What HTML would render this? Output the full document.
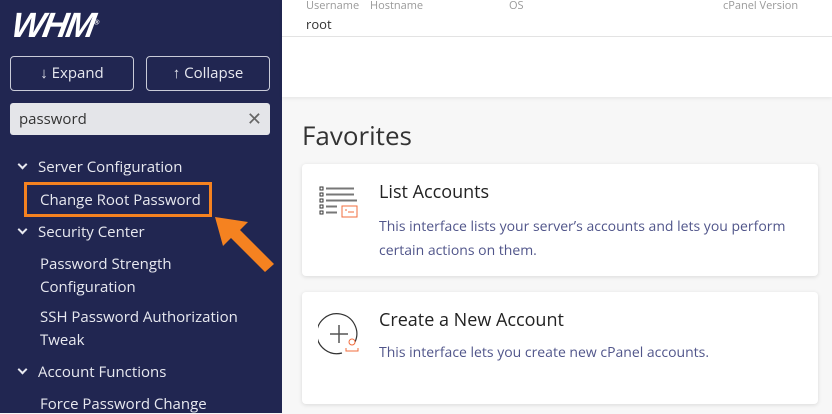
<!DOCTYPE html>
<html><head><meta charset="utf-8"><style>
*{margin:0;padding:0;box-sizing:border-box}
body{width:832px;height:413px;overflow:hidden;font-family:"Open Sans","Liberation Sans",sans-serif;background:#f7f7f7;position:relative}
.side{position:absolute;left:0;top:0;width:282px;height:413px;background:#212651;color:#e8e9f0}
.logo{position:absolute;left:12px;top:6px;font:italic 900 35px "Liberation Sans",sans-serif;color:#fff;letter-spacing:-2px;transform:skewX(-10deg)}
.btn{position:absolute;top:56px;height:35px;width:124px;border:1px solid #c9cbd8;border-radius:4px;color:#e8e9f0;font-size:15px;text-align:center;line-height:33px}
.search{position:absolute;left:10px;top:103px;width:260px;height:32px;background:#e4e5e9;border-radius:3px;color:#333;font-size:15px;line-height:32px;padding-left:9px}
.search span{position:absolute;right:8px;top:0;color:#666;font-size:18px}
.it{position:absolute;font-size:15px;color:#e8e9f0;white-space:nowrap}
.cat{left:38px}
.sub{left:40px}
.chev{position:absolute;left:19px;width:7px;height:7px;border-right:2px solid #e8e9f0;border-bottom:2px solid #e8e9f0;transform:rotate(45deg)}
.box{position:absolute;left:24px;top:182px;width:188px;height:35px;border:3px solid #f58220}
.top{position:absolute;left:282px;top:0;width:550px;height:97px;background:#fff;box-shadow:0 2px 3px rgba(0,0,0,.06)}
.hl{position:absolute;top:-2px;font-size:11px;color:#999}
.card{position:absolute;left:302px;width:516px;background:#fff;border-radius:4px;box-shadow:0 1px 4px rgba(0,0,0,.12)}
.ct{position:absolute;left:77px;font-size:18px;color:#222}
.cd{position:absolute;left:77px;font-size:14px;color:#50558a;line-height:24px}
</style></head><body>
<div class="side">
<div class="logo">WHM<sup style="font-size:7px">®</sup></div>
<div class="btn" style="left:10px">↓ Expand</div>
<div class="btn" style="left:146px">↑ Collapse</div>
<div class="search">password<span>✕</span></div>
<div class="chev" style="top:161px"></div><div class="it cat" style="top:157px">Server Configuration</div>
<div class="box"></div>
<div class="it sub" style="top:190px">Change Root Password</div>
<div class="chev" style="top:226px"></div><div class="it cat" style="top:222px">Security Center</div>
<div class="it sub" style="top:254px">Password Strength</div>
<div class="it sub" style="top:277px">Configuration</div>
<div class="it sub" style="top:307px">SSH Password Authorization</div>
<div class="it sub" style="top:330px">Tweak</div>
<div class="chev" style="top:366px"></div><div class="it cat" style="top:362px">Account Functions</div>
<div class="it sub" style="top:394px">Force Password Change</div>
<svg style="position:absolute;left:212px;top:214px" width="65" height="60" viewBox="0 0 65 60"><polygon points="3,3 36,8 28,16 62,50 53,58 19,24 11,32" fill="#f58220"/></svg>
</div>
<div class="top">
<div class="hl" style="left:24px">Username</div>
<div class="hl" style="left:88px">Hostname</div>
<div class="hl" style="left:227px">OS</div>
<div class="hl" style="left:441px">cPanel Version</div>
<div style="position:absolute;left:24px;top:15px;font-size:13px;color:#333">root</div>
<div style="position:absolute;left:0;top:36px;width:550px;height:1px;background:#e3e3e3"></div>
</div>
<div style="position:absolute;left:302px;top:117px;font-size:26px;color:#333">Favorites</div>
<div class="card" style="top:164px;height:112px">
<svg style="position:absolute;left:17px;top:22px" width="42" height="36" viewBox="0 0 42 36"><g fill="none" stroke="#333" stroke-width="1"><rect x="1" y="1" width="3" height="3"/><rect x="1" y="7" width="3" height="3"/><rect x="1" y="13" width="3" height="3"/><rect x="1" y="19" width="3" height="3"/><rect x="1" y="25" width="3" height="3"/></g><g stroke="#777" stroke-width="2"><line x1="7" y1="2.5" x2="35" y2="2.5"/><line x1="7" y1="8.5" x2="35" y2="8.5"/><line x1="7" y1="14.5" x2="38" y2="14.5"/><line x1="7" y1="20.5" x2="18" y2="20.5"/><line x1="7" y1="26.5" x2="18" y2="26.5"/></g><rect x="23" y="20" width="15" height="11" fill="none" stroke="#f26d3d"/><line x1="26" y1="24" x2="28" y2="24" stroke="#f26d3d"/><line x1="29" y1="26" x2="35" y2="26" stroke="#f26d3d"/></svg>
<div class="ct" style="top:16px">List Accounts</div>
<div class="cd" style="top:51px">This interface lists your server’s accounts and lets you perform<br>certain actions on them.</div>
</div>
<div class="card" style="top:292px;height:112px">
<svg style="position:absolute;left:16px;top:20px" width="44" height="44" viewBox="0 0 44 44"><path d="M37 30 A20 20 0 1 0 24 41" fill="none" stroke="#333" stroke-width="1.2"/><line x1="21" y1="13" x2="21" y2="31" stroke="#555" stroke-width="1.5"/><line x1="12" y1="22" x2="30" y2="22" stroke="#555" stroke-width="1.5"/><circle cx="34" cy="30" r="3" fill="none" stroke="#f26d3d"/><path d="M28 36v3h12v-3" fill="none" stroke="#f26d3d"/></svg>
<div class="ct" style="top:16px">Create a New Account</div>
<div class="cd" style="top:49px">This interface lets you create new cPanel accounts.</div>
</div>
</body></html>
